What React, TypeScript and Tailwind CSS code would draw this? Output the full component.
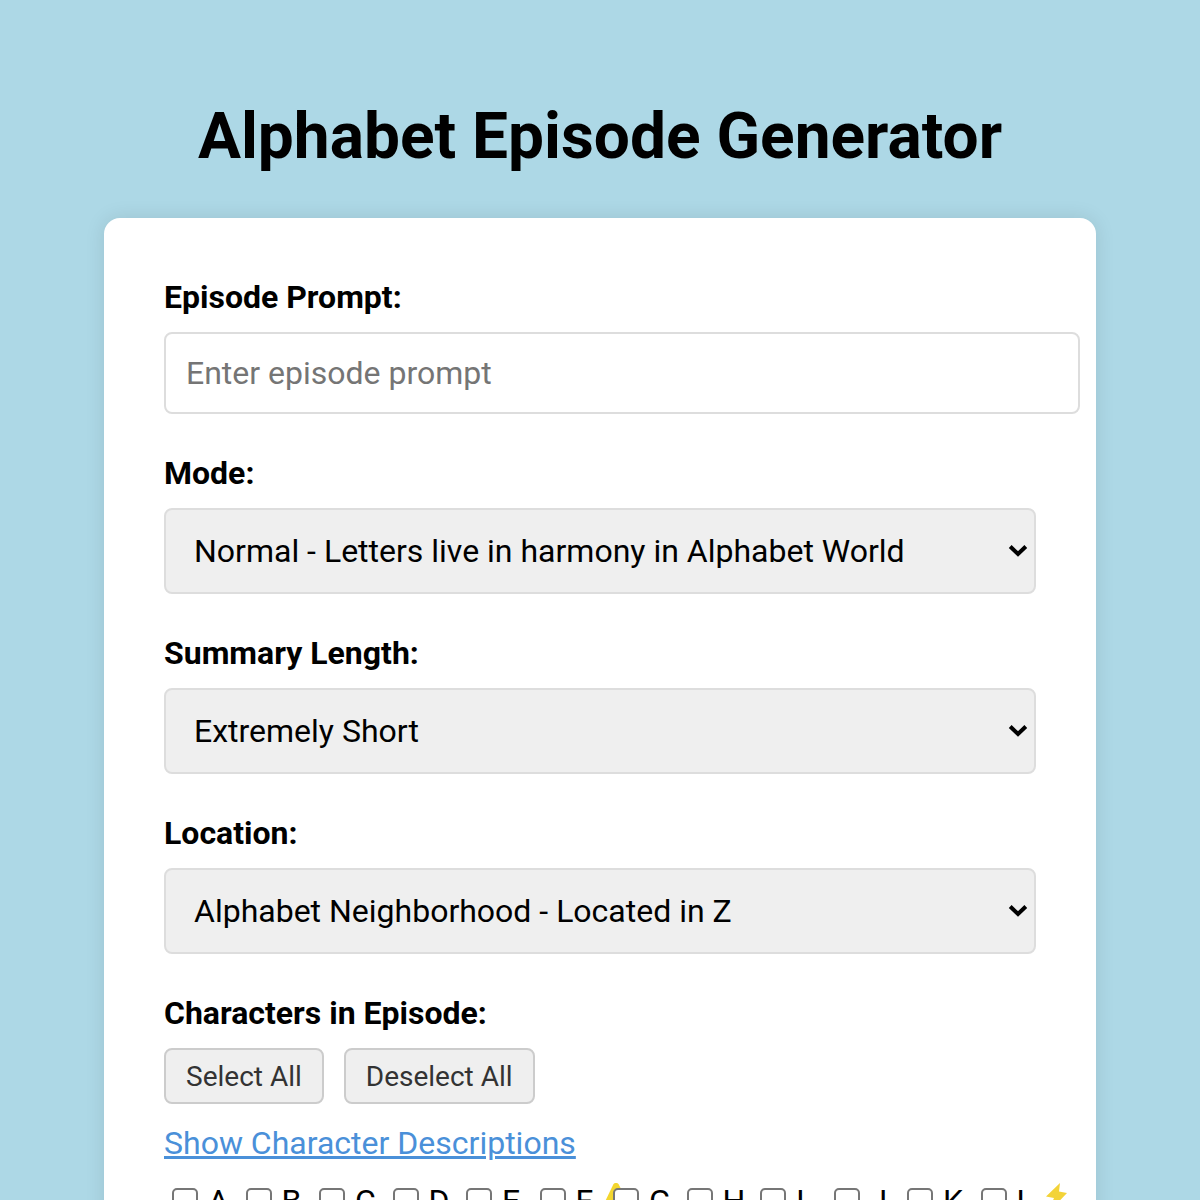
import { useState } from 'react';

interface Character {
  name: string;
  icon?: 'warning' | 'bolt';
}

const characters: Character[] = [
  { name: 'A' },
  { name: 'B' },
  { name: 'C' },
  { name: 'D' },
  { name: 'E' },
  { name: 'F', icon: 'warning' },
  { name: 'G' },
  { name: 'H' },
  { name: 'I' },
  { name: 'J' },
  { name: 'K' },
  { name: 'L', icon: 'bolt' },
];

function CharacterIcon({ icon }: { icon: 'warning' | 'bolt' }) {
  if (icon === 'warning') {
    return (
      <svg viewBox="0 0 32 32" className="-mt-1 ml-2 h-8 w-8 shrink-0" aria-hidden="true">
        <path d="M12.5 1Q15-1.500 17.500 1L31 27Q31.500 31 28 31H3Q-1 31 0 27Z" fill="#f3d62f" />
        <path d="M13.800 10h3.400l-.6 11h-2.200z" fill="#222" />
        <circle cx="15.500" cy="25.500" r="1.800" fill="#222" />
      </svg>
    );
  }

  return (
    <svg viewBox="0 0 32 32" className="-mt-1 ml-2 h-8 w-8 shrink-0" aria-hidden="true">
      <path d="M18 0 4 13.500l8 1.500L5 31 25 10l-8-1.500z" fill="#f3d338" />
    </svg>
  );
}

function SelectField({ id, label, options }: { id: string; label: string; options: string[] }) {
  return (
    <div className="mb-10">
      <label htmlFor={id} className="mb-4 block font-bold">
        {label}
      </label>
      <div className="relative">
        <select
          id={id}
          className="block h-[86px] w-full appearance-none rounded-lg border-2 border-[#ddd] bg-[#efefef] pr-12 pl-7 text-black"
        >
          {options.map((option) => (
            <option key={option}>{option}</option>
          ))}
        </select>
        <svg
          viewBox="0 0 20 14"
          className="pointer-events-none absolute top-9 right-2 h-[14px] w-5"
          fill="none"
          stroke="#000"
          strokeWidth="4"
          aria-hidden="true"
        >
          <path d="M2.200 2.500 10 10 17.800 2.500" />
        </svg>
      </div>
    </div>
  );
}

export default function App() {
  const [prompt, setPrompt] = useState('');
  const [selected, setSelected] = useState<string[]>([]);

  const toggle = (name: string) => {
    setSelected(selected.includes(name) ? selected.filter((n) => n !== name) : [...selected, name]);
  };

  const buttonClass = 'h-14 rounded-lg border-2 border-[#ccc] bg-[#efefef] px-5 pt-0.5 text-[28px] text-[#333]';

  return (
    <div className="min-h-screen bg-[#add8e6] px-[104px] pt-[99px] pb-10 font-[Roboto,sans-serif] text-[32px] leading-[38px] text-black">
      <h1 className="mb-[43px] text-center text-[64px] leading-[76px] font-bold">Alphabet Episode Generator</h1>

      <main className="rounded-2xl bg-white p-[60px] shadow-[0_0_20px_rgba(0,0,0,0.1)]">
        <div className="mb-10">
          <label htmlFor="prompt" className="mb-4 block font-bold">
            Episode Prompt:
          </label>
          <input
            id="prompt"
            type="text"
            value={prompt}
            onChange={(e) => setPrompt(e.target.value)}
            placeholder="Enter episode prompt"
            className="block h-[82px] w-[calc(100%+44px)] rounded-lg border-2 border-[#ddd] bg-white px-5 placeholder:text-[#757575]"
          />
        </div>

        <SelectField id="mode" label="Mode:" options={['Normal - Letters live in harmony in Alphabet World']} />
        <SelectField id="length" label="Summary Length:" options={['Extremely Short']} />
        <SelectField id="location" label="Location:" options={['Alphabet Neighborhood - Located in Z']} />

        <fieldset>
          <legend className="mb-4 font-bold">Characters in Episode:</legend>
          <div className="flex gap-5">
            <button type="button" className={buttonClass} onClick={() => setSelected(characters.map((c) => c.name))}>
              Select All
            </button>
            <button type="button" className={buttonClass} onClick={() => setSelected([])}>
              Deselect All
            </button>
          </div>
          <a href="#descriptions" className="mt-5 inline-block text-[#4a90d9] underline">
            Show Character Descriptions
          </a>

          <div id="descriptions" className="mt-5 grid grid-cols-12 gap-[10px]">
            {characters.map((character) => (
              <label key={character.name} className="flex min-w-0 items-center pl-2">
                {/* relative keeps the box above the icon of the previous column */}
                <input
                  type="checkbox"
                  checked={selected.includes(character.name)}
                  onChange={() => toggle(character.name)}
                  className="relative mr-[10px] h-[26px] w-[26px] shrink-0 appearance-none rounded-[5px] border-2 border-[#767676] bg-white checked:bg-[#0075ff]"
                />
                {character.name}
                {character.icon && <CharacterIcon icon={character.icon} />}
              </label>
            ))}
          </div>
        </fieldset>
      </main>
    </div>
  );
}
